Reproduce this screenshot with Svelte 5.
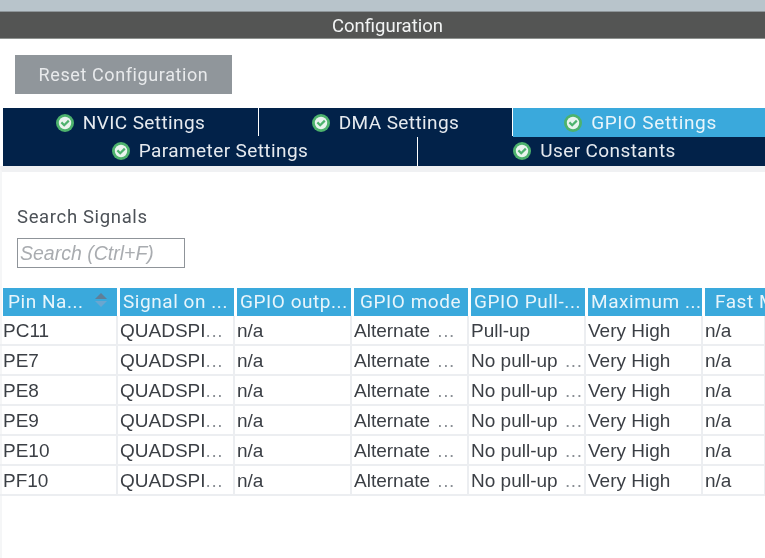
<script>
  const tabsTop = [
    { label: 'NVIC Settings' },
    { label: 'DMA Settings' },
    { label: 'GPIO Settings', active: true }
  ];
  const tabsBottom = ['Parameter Settings', 'User Constants'];

  const columns = ['Pin Na...', 'Signal on ...', 'GPIO outp...', 'GPIO mode', 'GPIO Pull-...', 'Maximum ...', 'Fast M'];

  const rows = [
    ['PC11', 'Pull-up'],
    ['PE7', 'No pull-up ...'],
    ['PE8', 'No pull-up ...'],
    ['PE9', 'No pull-up ...'],
    ['PE10', 'No pull-up ...'],
    ['PF10', 'No pull-up ...']
  ];
</script>

{#snippet check()}
  <svg class="check" viewBox="0 0 18 18" width="18" height="18" aria-hidden="true">
    <circle cx="9" cy="9" r="9" fill="#4db26d" />
    <circle cx="9" cy="9" r="6.2" fill="#e9f4ee" />
    <path d="M5.4 8.4 8.2 11.2 12.8 6.6" fill="none" stroke="#4db26d" stroke-width="2.2" />
  </svg>
{/snippet}

<div class="page">
  <div class="strip"></div>
  <div class="title">Configuration</div>

  <div class="actions">
    <button class="reset">Reset Configuration</button>
  </div>

  <div class="tabs">
    <div class="tab-row top">
      {#each tabsTop as tab}
        <div class="tab" class:active={tab.active}>{@render check()}<span>{tab.label}</span></div>
      {/each}
    </div>
    <div class="tab-row bottom">
      {#each tabsBottom as label}
        <div class="tab">{@render check()}<span>{label}</span></div>
      {/each}
    </div>
  </div>

  <div class="panel">
    <label class="search-label" for="search">Search Signals</label>
    <input id="search" class="search" placeholder="Search (Ctrl+F)" />

    <div class="table">
      <div class="head">
        {#each columns as col, i}
          <div class="th" class:first={i === 0} class:mode={i === 3} class:fast={i === 6}>
            <span>{col}</span>
            {#if i === 0}
              <svg class="sort" viewBox="0 0 12 16" width="12" height="16" aria-hidden="true">
                <path d="M6 1 12 7H0Z" fill="#5f7f98" />
                <path d="M6 15 12 9H0Z" fill="#6aa6cf" />
              </svg>
            {/if}
          </div>
        {/each}
      </div>
      {#each rows as row}
        <div class="tr">
          <div class="td">{row[0]}</div>
          <div class="td">QUADSPI<i class="tight">...</i></div>
          <div class="td">n/a</div>
          <div class="td">Alternate <i>...</i></div>
          <div class="td">
            {#if row[1].endsWith('...')}No pull-up <i>...</i>{:else}{row[1]}{/if}
          </div>
          <div class="td">Very High</div>
          <div class="td">n/a</div>
        </div>
      {/each}
    </div>
  </div>
</div>

<style>
  :global(body) {
    margin: 0;
    background: #fff;
  }

  .page {
    width: 765px;
    height: 558px;
    overflow: hidden;
    font-family: Roboto, "Liberation Sans", sans-serif;
    display: flex;
    flex-direction: column;
    filter: blur(0.35px);
  }

  .strip {
    height: 11px;
    background: #b8c4cb;
    border-bottom: 1px solid #8e9599;
  }

  .title {
    height: 26px;
    line-height: 28px;
    padding-left: 10px;
    background: #545554;
    border-bottom: 1px solid #8e9290;
    color: #f2f4f4;
    text-align: center;
    font-size: 18.5px;
  }

  .actions {
    padding: 16px 15px 14px;
  }

  .reset {
    display: block;
    width: 217px;
    height: 39px;
    background: #90969b;
    border: none;
    color: #e8eaec;
    font-family: inherit;
    font-size: 18px;
    letter-spacing: 0.6px;
    padding: 0;
  }

  .tabs {
    padding-left: 3px;
    background: #fff;
  }

  .tab-row {
    display: grid;
    column-gap: 1px;
  }

  .tab-row.top {
    grid-template-columns: 255px 253px 253px;
    height: 27px;
    margin-bottom: 1px;
  }

  .tab-row.bottom {
    grid-template-columns: 414px 347px;
    height: 30px;
  }

  .tab {
    background: #022249;
    color: #e6eaef;
    font-size: 19px;
    letter-spacing: 0.4px;
    line-height: 26px;
    display: flex;
    align-items: center;
    justify-content: center;
    gap: 9px;
  }

  .tab-row.bottom .tab:last-child {
    padding-left: 6px;
  }

  .tab.active {
    background: #3aa9dc;
    color: #e8f5fb;
    height: 29px;
    letter-spacing: 0.65px;
    padding-left: 2px;
    position: relative;
    z-index: 1;
  }

  .check {
    flex: none;
  }

  .panel {
    margin-top: 0;
    border-top: 6px solid #f0f1f3;
    border-left: 2px solid #f5f6f7;
    flex: 1;
    padding-top: 34px;
    display: flex;
    flex-direction: column;
    align-items: flex-start;
  }

  .search-label {
    margin-left: 15px;
    font-size: 18.5px;
    letter-spacing: 0.65px;
    line-height: 22px;
    color: #4c5157;
  }

  .search {
    margin: 10px 0 0 15px;
    width: 168px;
    height: 30px;
    box-sizing: border-box;
    border: 1px solid #8f9499;
    padding: 0 2px;
    font-family: "Liberation Sans", Arial, sans-serif;
    font-style: italic;
    font-size: 19.5px;
    outline: none;
  }

  .search::placeholder {
    color: #a9acb0;
    opacity: 1;
  }

  .table {
    margin-top: 20px;
    margin-left: -2px;
    width: 765px;
  }

  .head,
  .tr {
    display: grid;
    grid-template-columns: repeat(6, 117px) 63px;
  }

  .head {
    height: 28px;
    padding-left: 3px;
    grid-template-columns: repeat(6, 114px) 60px;
    column-gap: 3px;
  }

  .th {
    background: #3aa9dc;
    color: #e8f5fb;
    font-size: 19px;
    letter-spacing: 0.55px;
    line-height: 28px;
    padding-left: 3px;
    white-space: nowrap;
    overflow: hidden;
    position: relative;
  }

  .th.first {
    padding-left: 5px;
  }

  .th.mode {
    padding-left: 6px;
  }

  .th.fast {
    padding-left: 10px;
  }

  .sort {
    position: absolute;
    right: 10px;
    top: 4px;
  }

  .tr {
    height: 30px;
    padding-left: 1px;
    box-sizing: border-box;
    border-bottom: 2px solid #eceef1;
  }

  .td {
    font-family: "Liberation Sans", Arial, sans-serif;
    font-size: 19px;
    line-height: 30px;
    color: #3b3f45;
    padding-left: 2px;
    border-right: 2px solid #eceef1;
    white-space: nowrap;
    overflow: hidden;
  }

  .td i {
    font-style: normal;
    color: #8a8f95;
    letter-spacing: 0.6px;
    margin-left: 2px;
  }

  .td i.tight {
    margin-left: 0;
  }
</style>
